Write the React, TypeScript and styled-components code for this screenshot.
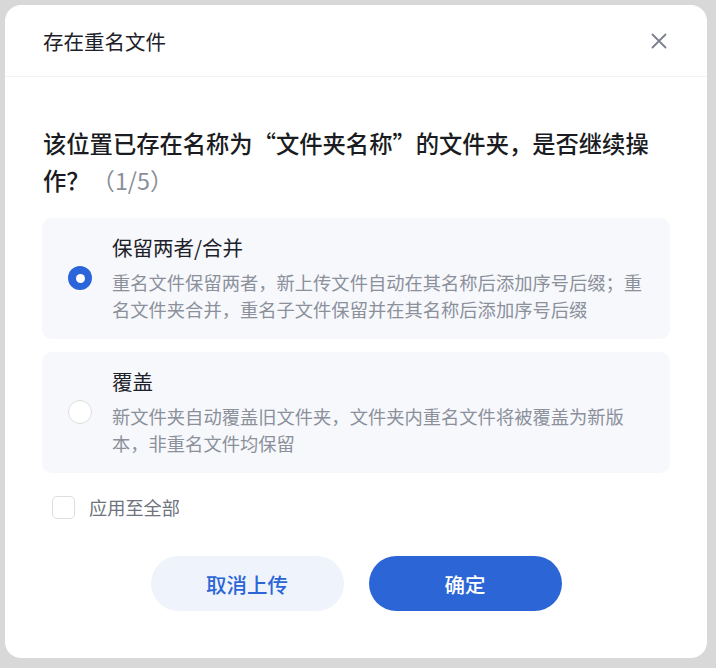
import * as React from 'react';
import styled, { createGlobalStyle } from 'styled-components';

const GlobalStyle = createGlobalStyle`
	html, body {
		margin: 0;
		padding: 0;
		background: #d8d8d8;
	}
	body {
		font-family: 'Noto Sans CJK SC', 'Noto Sans', sans-serif;
		-webkit-font-smoothing: antialiased;
	}
	* {
		box-sizing: border-box;
	}
`;

const Page = styled.div`
	width: 716px;
	height: 668px;
	padding: 5px 9px 10px 5px;
`;

const Dialog = styled.div`
	width: 702px;
	height: 653px;
	background: #ffffff;
	border-radius: 16px;
	display: flex;
	flex-direction: column;
	overflow: hidden;
`;

const Header = styled.div`
	height: 72px;
	flex: none;
	display: flex;
	align-items: center;
	justify-content: space-between;
	padding: 0 40px 0 38px;
	border-bottom: 1px solid #f2f3f6;
`;

const Title = styled.h2`
	margin: 0;
	font-size: 20.5px;
	font-weight: 400;
	color: #1d2129;
	line-height: 28px;
`;

const CloseButton = styled.button`
	width: 16px;
	height: 16px;
	padding: 0;
	border: none;
	background: none;
	cursor: pointer;
	display: flex;
	align-items: center;
	justify-content: center;
`;

const Body = styled.div`
	padding: 48px 37px 0 37px;
	display: flex;
	flex-direction: column;
`;

const Question = styled.p`
	margin: 0 0 19px 1px;
	font-size: 23.3px;
	line-height: 37px;
	font-weight: 500;
	color: #1a1c21;
	text-spacing-trim: space-all;
`;

const Counter = styled.span`
	display: inline-block;
	margin-left: 2px;
	font-weight: 400;
	color: #8a8f99;
`;

const OptionList = styled.div`
	display: flex;
	flex-direction: column;
	gap: 13px;
`;

const OptionCard = styled.label`
	display: flex;
	align-items: center;
	gap: 20px;
	min-height: 121px;
	padding: 15px 10px 16px 26px;
	background: #f7f8fc;
	border-radius: 10px;
	cursor: pointer;
`;

const Radio = styled.span<{ $checked: boolean }>`
	flex: none;
	width: 24px;
	height: 24px;
	border-radius: 50%;
	background: ${(p) => (p.$checked ? '#2b65d9' : '#ffffff')};
	border: ${(p) => (p.$checked ? 'none' : '1px solid #dcdee3')};
	display: flex;
	align-items: center;
	justify-content: center;
	&::after {
		content: '';
		display: ${(p) => (p.$checked ? 'block' : 'none')};
		width: 9px;
		height: 9px;
		border-radius: 50%;
		background: #ffffff;
	}
`;

const OptionText = styled.div`
	display: flex;
	flex-direction: column;
	gap: 8px;
`;

const OptionTitle = styled.div`
	font-size: 20.5px;
	line-height: 28px;
	color: #1d2129;
`;

const OptionDesc = styled.div`
	font-size: 18.3px;
	line-height: 27px;
	color: #8b909b;
	white-space: nowrap;
	& > span {
		display: block;
	}
`;

const CheckRow = styled.label`
	display: flex;
	align-items: center;
	gap: 14px;
	margin: 22px 0 0 10px;
	cursor: pointer;
`;

const CheckBox = styled.span`
	width: 23px;
	height: 23px;
	border: 1px solid #dcdee3;
	border-radius: 5px;
	background: #ffffff;
`;

const CheckLabel = styled.span`
	font-size: 18.2px;
	line-height: 24px;
	color: #6e737d;
`;

const Footer = styled.div`
	display: flex;
	justify-content: center;
	gap: 25px;
	margin-top: 37px;
`;

const Button = styled.button<{ $primary?: boolean }>`
	width: 193px;
	height: 55px;
	border: none;
	border-radius: 28px;
	font-family: inherit;
	font-size: 20.5px;
	font-weight: 500;
	cursor: pointer;
	background: ${(p) => (p.$primary ? '#2b65d6' : '#eff4fc')};
	color: ${(p) => (p.$primary ? '#ffffff' : '#2b65d6')};
`;

const options = [
	{
		key: 'keep',
		title: '保留两者/合并',
		desc: [
			'重名文件保留两者，新上传文件自动在其名称后添加序号后缀；重',
			'名文件夹合并，重名子文件保留并在其名称后添加序号后缀',
		],
	},
	{
		key: 'cover',
		title: '覆盖',
		desc: [
			'新文件夹自动覆盖旧文件夹，文件夹内重名文件将被覆盖为新版',
			'本，非重名文件均保留',
		],
	},
];

const App: React.FunctionComponent = () => {
	const [selected, setSelected] = React.useState('keep');

	return (
		<>
			<GlobalStyle />
			<Page>
				<Dialog>
					<Header>
						<Title>存在重名文件</Title>
						<CloseButton aria-label="关闭">
							<svg width="16" height="16" viewBox="0 0 16 16" fill="none">
								<path
									d="M1.5 1.5L14.5 14.5M14.5 1.5L1.5 14.5"
									stroke="#7a808c"
									strokeWidth="1.8"
									strokeLinecap="round"
								/>
							</svg>
						</CloseButton>
					</Header>
					<Body>
						<Question>
							<span>该位置已存在名称为“文件夹名称”的文件夹，是否继续操作？</span>
							<Counter>（1/5）</Counter>
						</Question>
						<OptionList>
							{options.map((o) => (
								<OptionCard key={o.key} onClick={() => setSelected(o.key)}>
									<Radio $checked={selected === o.key} />
									<OptionText>
										<OptionTitle>{o.title}</OptionTitle>
										<OptionDesc>
											{o.desc.map((line) => (
												<span key={line}>{line}</span>
											))}
										</OptionDesc>
									</OptionText>
								</OptionCard>
							))}
						</OptionList>
						<CheckRow>
							<CheckBox />
							<CheckLabel>应用至全部</CheckLabel>
						</CheckRow>
						<Footer>
							<Button>取消上传</Button>
							<Button $primary>确定</Button>
						</Footer>
					</Body>
				</Dialog>
			</Page>
		</>
	);
};

export default App;
